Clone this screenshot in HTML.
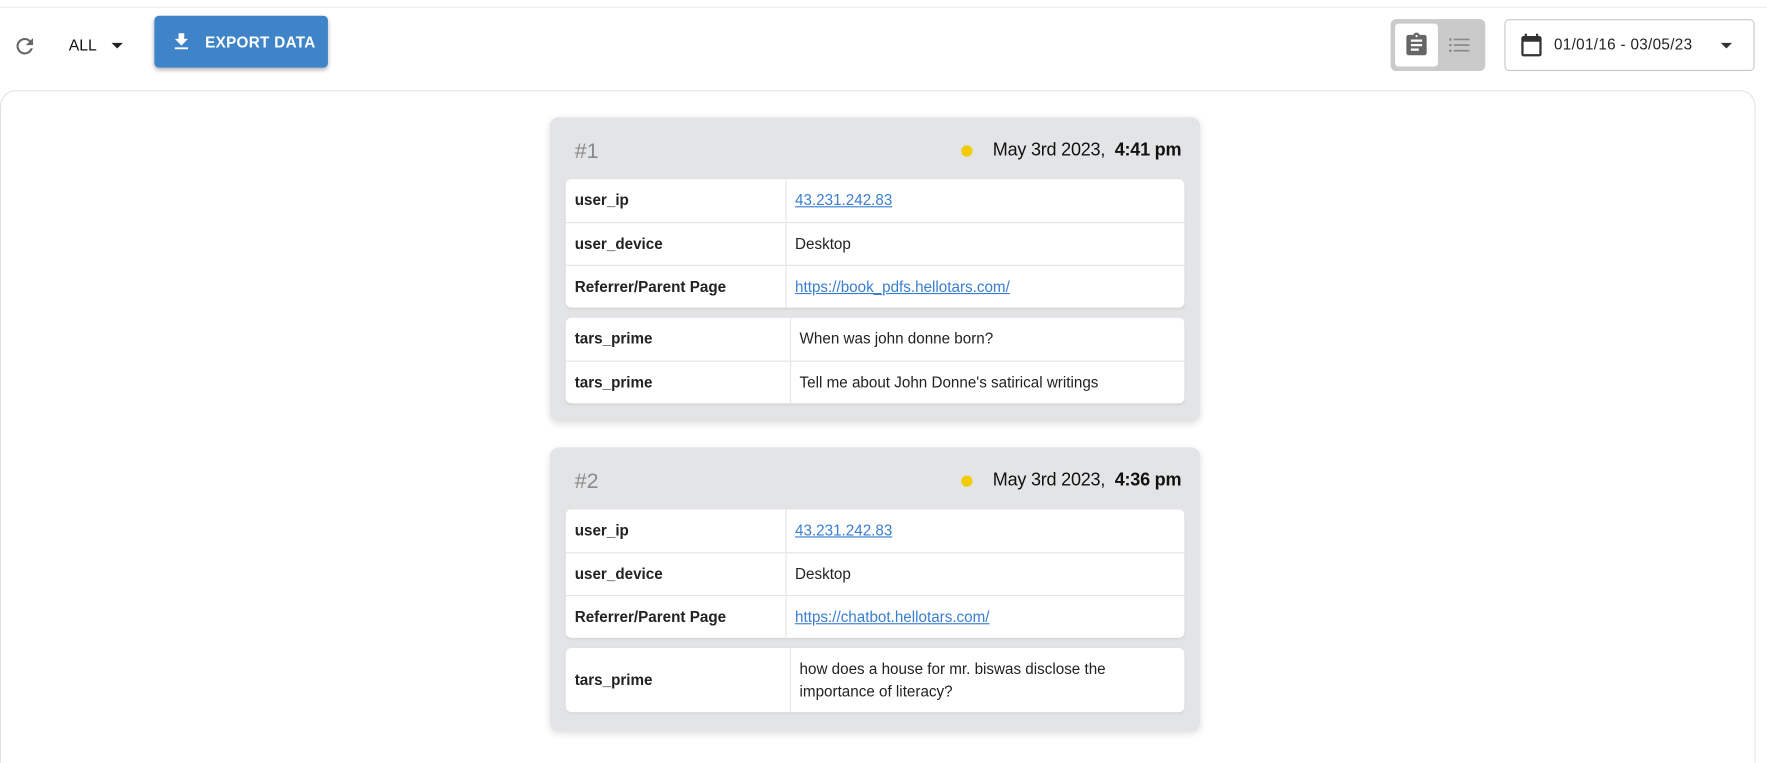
<!DOCTYPE html>
<html><head><style>
*{margin:0;padding:0;box-sizing:border-box}
html,body{width:1767px;height:763px;overflow:hidden;background:#fff}
#w{width:1568px;height:677px;position:relative;overflow:hidden;transform:scale(1.1269);transform-origin:0 0;font-family:"Liberation Sans",sans-serif;color:#222}
.a{position:absolute}
.topline{left:0;top:6px;width:1568px;height:1px;background:#eee}
.panel{left:0;top:80px;width:1558px;height:600px;border:1px solid #e2e2e2;border-bottom:none;border-radius:14px 14px 0 0;background:#fff}
.btn{left:137px;top:14px;width:154px;height:46px;background:#3f84c9;border-radius:4px;box-shadow:0 2px 4px rgba(0,0,0,.3);color:#fff;font-weight:bold;font-size:13.5px;letter-spacing:.3px}
.card{left:488px;width:577px;background:#e3e4e6;border-radius:8px;box-shadow:0 2px 6px rgba(0,0,0,.12)}
.num{font-size:19px;color:#8a8a8a}
.date{font-size:16px;color:#111;letter-spacing:-.2px}
.dot{width:10px;height:10px;border-radius:50%;background:#f2cc00}
table{position:absolute;left:14px;width:549px;background:#fff;border-radius:5px;border-collapse:collapse;font-size:13.5px;box-shadow:0 1px 2px rgba(0,0,0,.08);overflow:hidden}
td{border-bottom:1px solid #e4e4e4;padding:0 8px;height:38px;vertical-align:middle}
tr:last-child td{border-bottom:none}
td.k{font-weight:bold;color:#222;width:195px;border-right:1px solid #e4e4e4}
td.k2{width:199px}
a{color:#3a7ed0}
</style></head><body><div id="w">
<div class="a topline"></div>
<div class="a panel"></div>
<svg class="a" style="left:11px;top:30px" width="22" height="22" viewBox="0 0 24 24"><path fill="#666" d="M17.65 6.350A7.96 7.96 0 0 0 12 4a8 8 0 1 0 7.73 10h-2.08A6 6 0 1 1 12 6c1.66 0 3.14.69 4.22 1.78L13 11h7V4l-2.350 2.350z"/></svg>
<div class="a" style="left:61px;top:32px;font-size:14px;color:#111">ALL</div>
<div class="a" style="left:99px;top:38px;width:0;height:0;border-left:5px solid transparent;border-right:5px solid transparent;border-top:5px solid #222"></div>
<div class="a btn"><svg class="a" style="left:14px;top:13px" width="20" height="20" viewBox="0 0 24 24"><path fill="#fff" d="M19 9h-4V3H9v6H5l7 7 7-7zM5 18v2h14v-2H5z"/></svg><span class="a" style="left:45px;top:16px">EXPORT DATA</span></div>
<div class="a" style="left:1234px;top:17px;width:84px;height:46px;background:#cacaca;border-radius:5px"></div>
<div class="a" style="left:1238px;top:21px;width:38px;height:38px;background:#fff;border-radius:3px"></div>
<svg class="a" style="left:1245px;top:28px" width="24" height="24" viewBox="0 0 24 24"><path fill="#666" d="M19 3h-4.18C14.4 1.84 13.3 1 12 1s-2.4.84-2.82 2H5c-1.1 0-2 .9-2 2v14c0 1.1.9 2 2 2h14c1.1 0 2-.9 2-2V5c0-1.1-.9-2-2-2zm-7 0c.55 0 1 .45 1 1s-.45 1-1 1-1-.45-1-1 .45-1 1-1zm2 14H7v-2h7v2zm3-4H7v-2h10v2zm0-4H7V7h10v2z"/></svg>
<svg class="a" style="left:1283px;top:28px" width="24" height="24" viewBox="0 0 24 24"><path fill="#888" d="M3 6h2v2H3zM3 11h2v2H3zM3 16h2v2H3zM7 6.3h14v1.4H7zM7 11.3h14v1.4H7zM7 16.3h14v1.4H7z"/></svg>
<div class="a" style="left:1335px;top:17px;width:222px;height:46px;border:1px solid #c8c8c8;border-radius:4px"></div>
<svg class="a" style="left:1347px;top:28px" width="24" height="24" viewBox="0 0 24 24"><path fill="#333" d="M19 4h-1V2h-2v2H8V2H6v2H5c-1.1 0-2 .9-2 2v14c0 1.1.9 2 2 2h14c1.1 0 2-.9 2-2V6c0-1.1-.9-2-2-2zm0 16H5V9h14v11z"/></svg>
<div class="a" style="left:1379px;top:32px;font-size:13.5px;color:#222;letter-spacing:.3px">01/01/16 - 03/05/23</div>
<div class="a" style="left:1527px;top:38px;width:0;height:0;border-left:5px solid transparent;border-right:5px solid transparent;border-top:5px solid #333"></div>

<div class="a card" style="top:104px;height:270px">
<div class="a num" style="left:22px;top:20px">#1</div>
<div class="a dot" style="left:365px;top:25px"></div>
<div class="a date" style="left:393px;top:21px">May 3rd 2023, &nbsp;<b>4:41 pm</b></div>
<table style="top:55px"><tr><td class="k">user_ip</td><td><a href="#">43.231.242.83</a></td></tr><tr><td class="k">user_device</td><td>Desktop</td></tr><tr><td class="k">Referrer/Parent Page</td><td><a href="#">https://book_pdfs.hellotars.com/</a></td></tr></table>
<table style="top:178px"><tr><td class="k k2">tars_prime</td><td>When was john donne born?</td></tr><tr><td class="k k2">tars_prime</td><td>Tell me about John Donne's satirical writings</td></tr></table>
</div>

<div class="a card" style="top:397px;height:252px">
<div class="a num" style="left:22px;top:20px">#2</div>
<div class="a dot" style="left:365px;top:25px"></div>
<div class="a date" style="left:393px;top:21px">May 3rd 2023, &nbsp;<b>4:36 pm</b></div>
<table style="top:55px"><tr><td class="k">user_ip</td><td><a href="#">43.231.242.83</a></td></tr><tr><td class="k">user_device</td><td>Desktop</td></tr><tr><td class="k">Referrer/Parent Page</td><td><a href="#">https://chatbot.hellotars.com/</a></td></tr></table>
<table style="top:178px"><tr><td class="k k2" style="height:57px">tars_prime</td><td style="line-height:20px">how does a house for mr. biswas disclose the<br>importance of literacy?</td></tr></table>
</div>
</div></body></html>
